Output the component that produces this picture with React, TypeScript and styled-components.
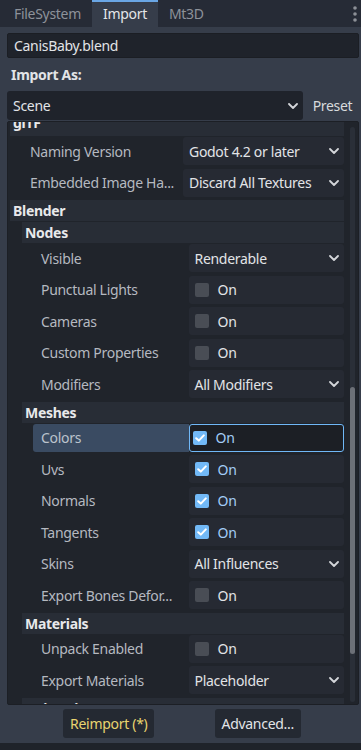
import React from "react";
import styled, { createGlobalStyle } from "styled-components";

const Global = createGlobalStyle`
  html, body { margin: 0; padding: 0; background: #1f232a; }
  body {
    font-family: "Noto Sans", "Open Sans", sans-serif;
    font-size: 14px;
    letter-spacing: -0.3px;
    color: #e0e0e0;
  }
  * { box-sizing: border-box; }
`;

const Dock = styled.div`
  width: 361px;
  height: 743px;
  display: flex;
  flex-direction: column;
  background: #363d4a;
`;

const TabBar = styled.div`
  height: 27px;
  flex: none;
  display: flex;
  align-items: stretch;
  padding-left: 3px;
  background: #262b36;
`;

const Tab = styled.div<{ $active?: boolean }>`
  padding: 0 11px 2px;
  display: flex;
  align-items: center;
  white-space: nowrap;
  color: ${(p) => (p.$active ? "#e4e6e9" : "#8d929a")};
  background: ${(p) => (p.$active ? "#363d4a" : "transparent")};
  border-top: 2px solid ${(p) => (p.$active ? "#6aa6e4" : "transparent")};
`;

const MenuButton = styled.div`
  margin-left: auto;
  width: 12px;
  display: flex;
  align-items: center;
  justify-content: center;
`;

const Body = styled.div`
  flex: 1;
  min-height: 0;
  display: flex;
  flex-direction: column;
  padding: 6px 2px 0 7px;
`;

const FileField = styled.div`
  height: 25px;
  flex: none;
  display: flex;
  align-items: center;
  padding-left: 6px;
  background: #1f232b;
  border: 1px solid #1b1e24;
  border-radius: 2px;
  color: #e2e4e7;
`;

const SectionLabel = styled.div`
  height: 33px;
  flex: none;
  display: flex;
  align-items: center;
  padding-left: 4px;
  font-weight: 700;
  color: #e2e4e7;
`;

const PresetRow = styled.div`
  height: 29px;
  flex: none;
  display: flex;
  align-items: stretch;
`;

const Select = styled.div`
  width: 296px;
  display: flex;
  align-items: center;
  justify-content: space-between;
  padding: 0 5px 0 6px;
  background: #1f232b;
  border-radius: 3px;
  color: #e2e4e7;
`;

const FlatButton = styled.div`
  flex: 1;
  display: flex;
  align-items: center;
  justify-content: center;
  padding-left: 3px;
  color: #d8dadd;
`;

const Inspector = styled.div`
  flex: 1;
  min-height: 0;
  margin-top: 1px;
  display: flex;
  overflow: hidden;
  background: #20242b;
  border: 1px solid #1c1f25;
  border-radius: 2px;
`;

const InspectorContent = styled.div`
  flex: 1;
  min-width: 0;
  padding-left: 2px;
  margin-top: -7px;
  display: flex;
  flex-direction: column;
`;

const ScrollTrack = styled.div`
  flex: none;
  width: 5px;
  margin: 5px 3px 2px 6px;
  background: #2a2f38;
  border-radius: 3px;
  display: flex;
  flex-direction: column;
`;

const ScrollGrab = styled.div<{ $offset: number; $size: number }>`
  margin-top: ${(p) => p.$offset}px;
  height: ${(p) => p.$size}px;
  background: #6c7077;
  border-radius: 3px;
`;

const Header = styled.div<{ $level: number; $clipped?: boolean }>`
  flex: none;
  height: 21px;
  margin-left: ${(p) => (p.$level ? 12 : 0)}px;
  margin-bottom: 1px;
  padding-left: 3px;
  padding-bottom: ${(p) => (p.$clipped ? 6 : 0)}px;
  display: flex;
  align-items: center;
  background: #282d36;
  font-weight: 700;
  color: #e8e9eb;
  white-space: nowrap;
`;

const Row = styled.div<{ $level: number }>`
  flex: none;
  height: 28px;
  margin-left: ${(p) => (p.$level === 2 ? 23 : 12)}px;
  margin-bottom: 3.5px;
  display: grid;
  grid-template-columns: 1fr 1fr;
`;

const Label = styled.div<{ $selected?: boolean }>`
  display: flex;
  align-items: center;
  padding-left: 8px;
  overflow: hidden;
  white-space: nowrap;
  color: ${(p) => (p.$selected ? "#bcc3cd" : "#b5b9c0")};
  background: ${(p) => (p.$selected ? "#3a4b62" : "transparent")};
  border-radius: 3px 0 0 3px;
`;

const Value = styled.div<{ $selected?: boolean }>`
  display: flex;
  align-items: center;
  justify-content: space-between;
  padding: 0 4px 0 ${(p) => (p.$selected ? 3 : 5)}px;
  background: ${(p) => (p.$selected ? "#1c1f25" : "#262a33")};
  border: ${(p) => (p.$selected ? "1.5px solid #70b8f8" : "1px solid transparent")};
  border-radius: 3px;
  white-space: nowrap;
  overflow: hidden;
  color: #e2e4e7;
`;

const CheckWrap = styled.div<{ $on: boolean }>`
  display: flex;
  align-items: center;
  gap: 9px;
  color: ${(p) => (p.$on ? "#a3cdf7" : "#e2e4e7")};
`;

const Box = styled.div<{ $on: boolean }>`
  width: 14px;
  height: 14px;
  border-radius: 2px;
  background: ${(p) => (p.$on ? "#72b9f7" : "#494d55")};
  display: flex;
  align-items: center;
  justify-content: center;
`;

const Footer = styled.div`
  height: 38px;
  flex: none;
  display: flex;
  justify-content: space-evenly;
  align-items: flex-start;
  padding-top: 4px;
  margin-right: -2px;
  margin-left: -4px;
`;

const Button = styled.div<{ $warn?: boolean }>`
  height: 29px;
  padding: 0 7px;
  display: flex;
  align-items: center;
  background: #242932;
  border-radius: 3px;
  color: ${(p) => (p.$warn ? "#e9d46f" : "#e2e4e7")};
  white-space: nowrap;
`;

const Chevron = () => (
  <svg width="10" height="6" viewBox="0 0 10 6">
    <polyline points="1,1 5,5 9,1" fill="none" stroke="#d4d6da" strokeWidth="1.8" strokeLinecap="round" strokeLinejoin="round" />
  </svg>
);

const Dots = () => (
  <svg width="6" height="20" viewBox="0 0 6 20">
    <circle cx="3" cy="4" r="1.8" fill="#8c9097" />
    <circle cx="3" cy="10" r="1.8" fill="#8c9097" />
    <circle cx="3" cy="16" r="1.8" fill="#8c9097" />
  </svg>
);

const Tick = () => (
  <svg width="10" height="8" viewBox="0 0 10 8">
    <polyline points="1.2,4.2 3.8,6.6 8.8,1.4" fill="none" stroke="#ffffff" strokeWidth="2" strokeLinecap="round" strokeLinejoin="round" />
  </svg>
);

type Item =
  | { kind: "header"; text: string; level: number; clipped?: boolean }
  | { kind: "enum"; label: string; value: string; level: number; selected?: boolean }
  | { kind: "bool"; label: string; on: boolean; level: number; selected?: boolean };

const items: Item[] = [
  { kind: "header", text: "glTF", level: 0, clipped: true },
  { kind: "enum", label: "Naming Version", value: "Godot 4.2 or later", level: 1 },
  { kind: "enum", label: "Embedded Image Ha...", value: "Discard All Textures", level: 1 },
  { kind: "header", text: "Blender", level: 0 },
  { kind: "header", text: "Nodes", level: 1 },
  { kind: "enum", label: "Visible", value: "Renderable", level: 2 },
  { kind: "bool", label: "Punctual Lights", on: false, level: 2 },
  { kind: "bool", label: "Cameras", on: false, level: 2 },
  { kind: "bool", label: "Custom Properties", on: false, level: 2 },
  { kind: "enum", label: "Modifiers", value: "All Modifiers", level: 2 },
  { kind: "header", text: "Meshes", level: 1 },
  { kind: "bool", label: "Colors", on: true, level: 2, selected: true },
  { kind: "bool", label: "Uvs", on: true, level: 2 },
  { kind: "bool", label: "Normals", on: true, level: 2 },
  { kind: "bool", label: "Tangents", on: true, level: 2 },
  { kind: "enum", label: "Skins", value: "All Influences", level: 2 },
  { kind: "bool", label: "Export Bones Defor...", on: false, level: 2 },
  { kind: "header", text: "Materials", level: 1 },
  { kind: "bool", label: "Unpack Enabled", on: false, level: 2 },
  { kind: "enum", label: "Export Materials", value: "Placeholder", level: 2 },
  { kind: "header", text: "Animation", level: 1 },
];

export default function App() {
  return (
    <>
      <Global />
      <Dock>
        <TabBar>
          <Tab>FileSystem</Tab>
          <Tab $active>Import</Tab>
          <Tab>Mt3D</Tab>
          <MenuButton>
            <Dots />
          </MenuButton>
        </TabBar>
        <Body>
          <FileField>CanisBaby.blend</FileField>
          <SectionLabel>Import As:</SectionLabel>
          <PresetRow>
            <Select>
              <span>Scene</span>
              <Chevron />
            </Select>
            <FlatButton>Preset</FlatButton>
          </PresetRow>
          <Inspector>
            <InspectorContent>
              {items.map((it, i) =>
                it.kind === "header" ? (
                  <Header key={i} $level={it.level} $clipped={it.clipped}>
                    {it.text}
                  </Header>
                ) : (
                  <Row key={i} $level={it.level}>
                    <Label $selected={it.selected}>{it.label}</Label>
                    <Value $selected={it.selected}>
                      {it.kind === "enum" ? (
                        <>
                          <span>{it.value}</span>
                          <Chevron />
                        </>
                      ) : (
                        <CheckWrap $on={it.on}>
                          <Box $on={it.on}>{it.on && <Tick />}</Box>
                          <span>On</span>
                        </CheckWrap>
                      )}
                    </Value>
                  </Row>
                )
              )}
            </InspectorContent>
            <ScrollTrack>
              <ScrollGrab $offset={260} $size={267} />
            </ScrollTrack>
          </Inspector>
          <Footer>
            <Button $warn>Reimport (*)</Button>
            <Button>Advanced...</Button>
          </Footer>
        </Body>
      </Dock>
    </>
  );
}
